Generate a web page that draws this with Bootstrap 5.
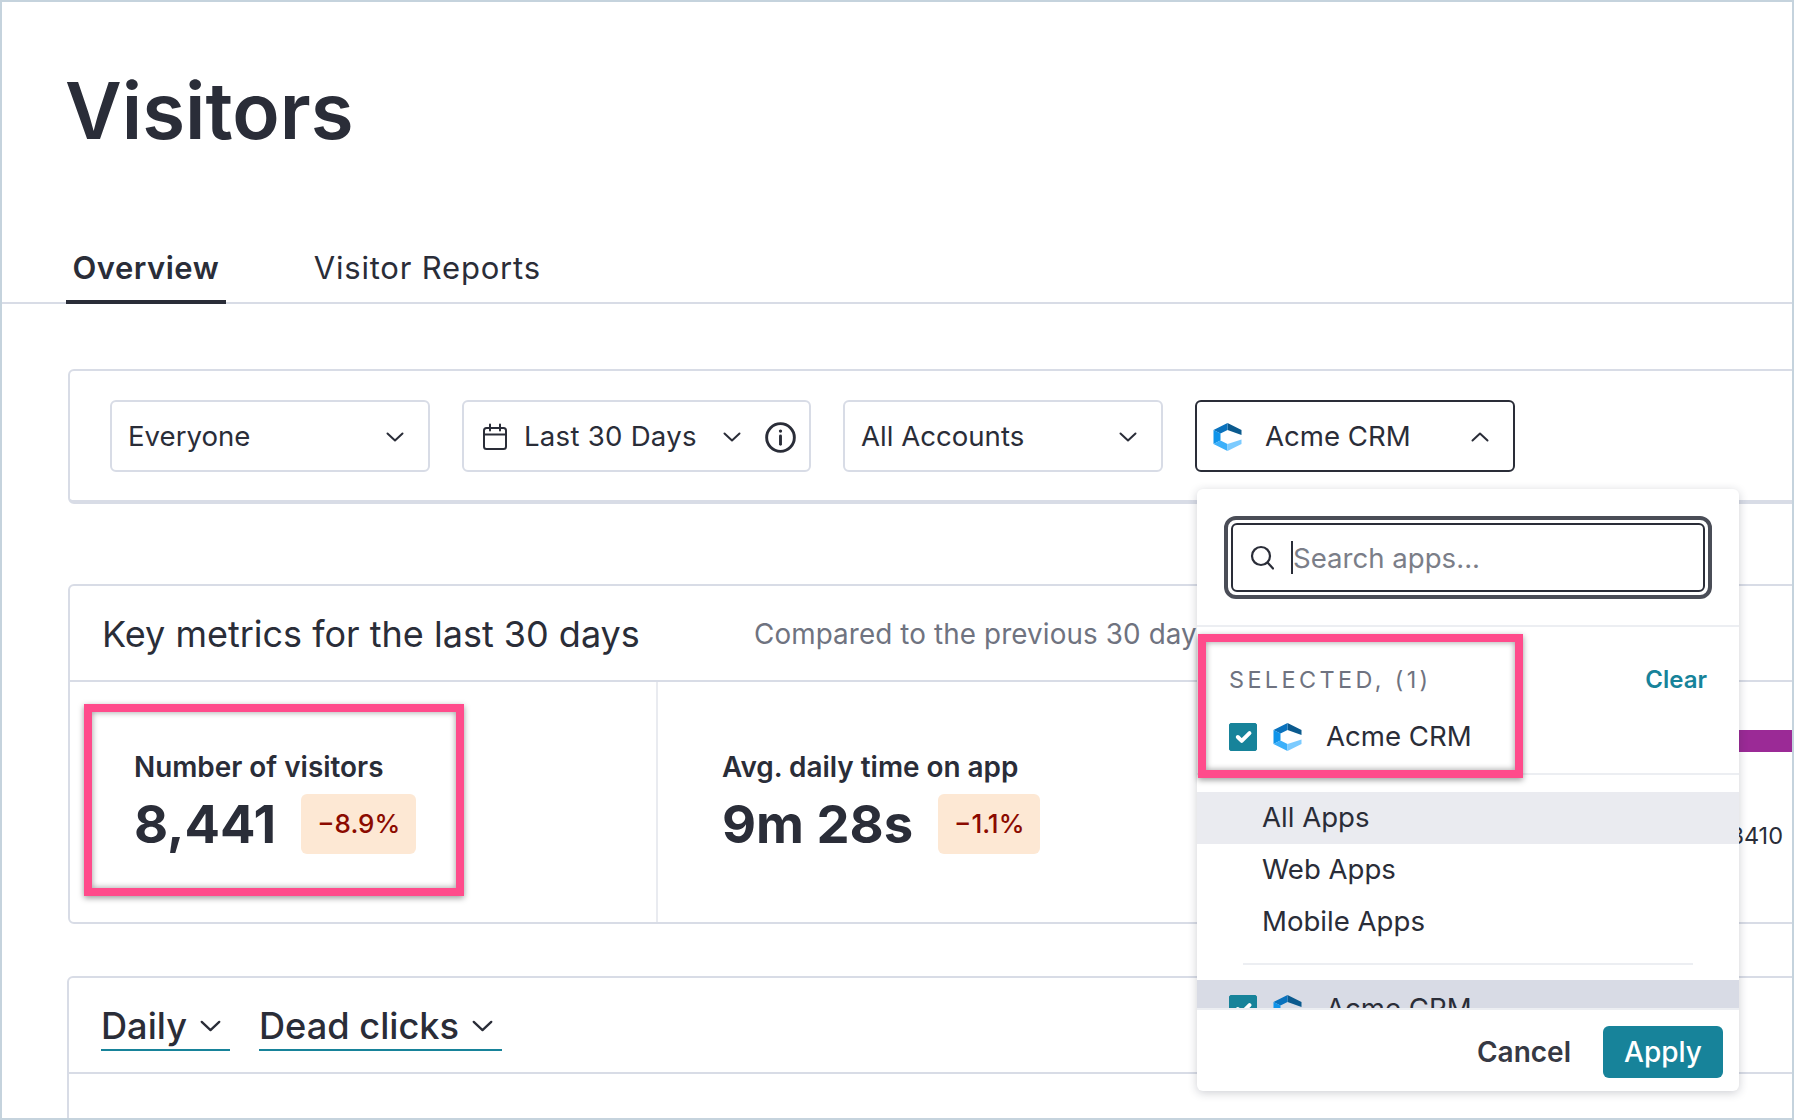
<!DOCTYPE html>
<html>
<head>
    <title>Visitors</title>
    <meta name="viewport" content="width=device-width, initial-scale=1.0">
    <link href="https://cdn.jsdelivr.net/npm/bootstrap@5.3.0/dist/css/bootstrap.min.css" rel="stylesheet">
    <style>
        :root {
            --ink: #2a2d38;
            --line: #d8dce6;
            --teal: #17839a;
            --pink: #ff4b8b;
        }
        body {
            margin: 0;
            background: #fff;
            color: var(--ink);
            font-family: Inter, "Liberation Sans", sans-serif;
        }
        .page-frame {
            width: 1794px;
            height: 1120px;
            border: 2px solid #c5d3dd;
            overflow: hidden;
            position: relative;
        }
        .page-title {
            font-size: 78px;
            font-weight: 600;
            line-height: 90px;
            margin: 64px 0 0 63px;
            color: var(--ink);
        }
        .tab-row {
            margin-top: 80px;
            padding-left: 64px;
            height: 68px;
            border-bottom: 2px solid var(--line);
            gap: 81px;
        }
        .tab-row .nav-link {
            padding: 0 7px;
            height: 68px;
            line-height: 64px;
            font-size: 31px;
            letter-spacing: .8px;
            color: var(--ink);
        }
        .tab-row .nav-link.active {
            font-weight: 600;
            letter-spacing: .5px;
            padding: 0 6.500px;
            border-bottom: 4px solid var(--ink);
        }
        .sheet {
            border: 2px solid var(--line);
            border-radius: 6px;
            margin-left: 66px;
            margin-right: -30px;
        }
        .filter-sheet {
            margin-top: 65px;
            padding: 29px 40px;
            height: 135px;
            border-bottom-width: 4px;
            gap: 32px;
        }
        .filter-btn {
            height: 72px;
            width: 320px;
            border: 2px solid var(--line);
            border-radius: 6px;
            padding: 2px 24px 0 16px;
            font-size: 27.6px;
            color: var(--ink);
        }
        .filter-btn.date-btn {
            width: 349px;
            padding-left: 18px;
            padding-right: 13px;
            letter-spacing: .25px;
        }
        .filter-btn.open-btn, .filter-btn.open-btn:hover {
            border-color: var(--ink);
            color: var(--ink);
        }
        .date-chev {
            margin-left: 26px;
        }
        .open-name {
            margin-left: 23px;
        }
        .metrics-sheet {
            margin-top: 80px;
            height: 340px;
        }
        .metrics-head {
            height: 96px;
            border-bottom: 2px solid var(--line);
            padding-left: 32px;
        }
        .metrics-title {
            font-size: 36px;
            width: 652px;
            white-space: nowrap;
            padding-top: 2px;
        }
        .metrics-note {
            font-size: 27.8px;
            letter-spacing: .12px;
            color: #6f7380;
            white-space: nowrap;
            padding-top: 4px;
        }
        .metric-cell {
            width: 588px;
            padding: 65px 0 0 64px;
            border-right: 2px solid #e9ebf0;
        }
        .metric-label {
            font-size: 27.9px;
            font-weight: 600;
            line-height: 40px;
            margin-bottom: 7px;
        }
        .metric-value {
            font-size: 52.5px;
            font-weight: 650;
            line-height: 60px;
        }
        .delta {
            background: #fde8d4;
            color: #8b0a00;
            border-radius: 6px;
            height: 60px;
            line-height: 60px;
            padding: 0 16px;
            font-size: 26px;
            font-weight: 500;
            margin-left: 25px;
        }
        .far-cell {
            padding: 48px 0 0 0;
        }
        .far-bar {
            height: 22px;
            background: #9b2a96;
        }
        .far-num {
            font-size: 23.5px;
            margin-top: 66px;
            padding-right: 37px;
        }
        .chart-sheet {
            margin-top: 52px;
            margin-left: 65px;
            height: 300px;
        }
        .chart-head {
            height: 96px;
            border-bottom: 2px solid var(--line);
            padding: 20px 0 0 32px;
            gap: 29px;
        }
        .pick {
            font-size: 36.2px;
            font-weight: 500;
            height: 53px;
            padding-top: 4px;
            line-height: 48px;
            border-bottom: 2px solid var(--teal);
            gap: 13px;
            padding-right: 9px;
        }
        .app-menu {
            position: absolute;
            top: 89px;
            left: 2px;
            width: 542px;
            height: 602px;
            background: #fff;
            border-radius: 6px;
            box-shadow: 0 2px 10px rgba(30, 35, 60, .22);
            z-index: 5;
        }
        .search-wrap {
            height: 138px;
            padding: 27px 27px 0 27px;
            border-bottom: 2px solid #eceef2;
        }
        .search-box {
            height: 83px;
            border: 4px solid #4a4d57;
            border-radius: 12px;
            padding: 3px;
        }
        .search-inner {
            height: 100%;
            border: 2px solid var(--ink);
            border-radius: 6px;
            padding-left: 17px;
            gap: 17px;
        }
        .search-caret {
            width: 2px;
            height: 33px;
            background: var(--ink);
            margin-right: -17px;
            flex: none;
        }
        .search-input {
            border: 0;
            outline: 0;
            font-size: 27.6px;
            width: 380px;
            padding: 3px 0 0 0;
            font-family: inherit;
        }
        .search-input::placeholder {
            color: #7b7e88;
        }
        .picked-block {
            height: 148px;
            padding: 36px 32px 0 32px;
            border-bottom: 2px solid #eceef2;
        }
        .picked-title {
            font-size: 23.4px;
            letter-spacing: 3.4px;
            color: #6f7380;
            line-height: 34px;
        }
        .clear-link {
            font-size: 24px;
            font-weight: 600;
            color: var(--teal);
            text-decoration: none;
            line-height: 34px;
        }
        .app-row {
            gap: 16px;
            font-size: 27.6px;
            height: 52px;
            margin-top: 14px;
        }
        .app-row .form-check-input {
            width: 28px;
            height: 28px;
            margin: 0;
            border-radius: 2px;
            background-color: var(--teal);
            border-color: var(--teal);
            flex: none;
        }
        .app-row .app-name {
            margin-left: 8px;
        }
        .menu-scroll {
            height: 233px;
            padding-top: 17px;
            overflow: hidden;
        }
        .menu-scroll .list-group-item {
            border: 0;
            border-radius: 0;
            padding: 0 0 0 65px;
            height: 52px;
            line-height: 51px;
            font-size: 27.6px;
            color: var(--ink);
        }
        .menu-scroll .list-group-item.active {
            background: #eaebf0;
            color: var(--ink);
        }
        .menu-rule {
            border-top: 2px solid #eceef2;
            margin: 15px 46px 15px 46px;
            height: 0;
        }
        .app-row.hit-row {
            background: #d8dbe5;
            padding: 5px 0 0 32px;
            margin-top: 0;
        }
        .menu-foot {
            border-top: 2px solid #eceef2;
            padding: 16px 16px 0 0;
            gap: 32px;
        }
        .cancel-btn {
            font-size: 28px;
            font-weight: 600;
            color: #363944;
            padding: 0;
            border: 0;
        }
        .apply-btn, .apply-btn:hover {
            background: var(--teal);
            color: #fff;
            font-size: 28px;
            font-weight: 500;
            width: 120px;
            height: 52px;
            padding: 0;
            border-radius: 6px;
        }
        .callout {
            position: absolute;
            border: 8px solid var(--pink);
            box-shadow: 0 2px 6px rgba(0, 0, 0, .4), inset 0 0 6px rgba(0, 0, 0, .4);
            z-index: 6;
            pointer-events: none;
        }
        .callout-metric {
            left: 82px;
            top: 702px;
            width: 380px;
            height: 192px;
        }
        .callout-picked {
            left: 1196px;
            top: 632px;
            width: 325px;
            height: 144px;
        }
    </style>
</head>
<body>
    <div class="page-frame">
        <h1 class="page-title">Visitors</h1>

        <ul class="nav tab-row">
            <li class="nav-item"><a class="nav-link active" href="#">Overview</a></li>
            <li class="nav-item"><a class="nav-link" href="#">Visitor Reports</a></li>
        </ul>

        <div class="sheet filter-sheet d-flex">
            <button class="btn filter-btn d-flex align-items-center justify-content-between">
                <span>Everyone</span>
                <svg width="18" height="10" viewBox="0 0 18 10" fill="none" stroke="#2a2d38" stroke-width="2" stroke-linecap="round" stroke-linejoin="round"><path d="M1.5 1.5 9 8.5l7.5-7"/></svg>
            </button>
            <button class="btn filter-btn date-btn d-flex align-items-center">
                <svg class="me-3" width="26" height="28" viewBox="0 0 26 28" fill="none" stroke="#2a2d38" stroke-width="2" stroke-linecap="round"><rect x="2" y="5" width="22" height="21" rx="2.5"/><path d="M2 11.5h22M8 1.5v6M18 1.5v6"/></svg>
                <span>Last 30 Days</span>
                <svg class="date-chev" width="18" height="10" viewBox="0 0 18 10" fill="none" stroke="#2a2d38" stroke-width="2" stroke-linecap="round" stroke-linejoin="round"><path d="M1.5 1.5 9 8.5l7.5-7"/></svg>
                <svg class="ms-auto" width="31" height="31" viewBox="0 0 30 30" fill="none" stroke="#2a2d38" stroke-width="2.8"><circle cx="15" cy="15" r="13.400"/><path d="M15 13.5v8" stroke-linecap="round"/><circle cx="15" cy="8.800" r="1.600" fill="#2a2d38" stroke="none"/></svg>
            </button>
            <button class="btn filter-btn d-flex align-items-center justify-content-between">
                <span>All Accounts</span>
                <svg width="18" height="10" viewBox="0 0 18 10" fill="none" stroke="#2a2d38" stroke-width="2" stroke-linecap="round" stroke-linejoin="round"><path d="M1.5 1.5 9 8.5l7.5-7"/></svg>
            </button>
            <div class="position-relative">
                <button class="btn filter-btn open-btn d-flex align-items-center">
                    <svg width="29" height="28" viewBox="0 0 28 28"><path fill="#0b5a8e" d="M14 0l14 7v5L14 7z"/><path fill="#0a72bd" d="M14 0L0 7l7 3.500L14 7z"/><path fill="#0f94ea" d="M0 7l7 3.500v7L0 21z"/><path fill="#3cb0fa" d="M0 21l7-3.500 7 3.500v7z"/><path fill="#7ccbff" d="M14 28l14-7v-4.500L14 21z"/></svg>
                    <span class="open-name">Acme CRM</span>
                    <svg class="ms-auto" width="18" height="10" viewBox="0 0 18 10" fill="none" stroke="#2a2d38" stroke-width="2" stroke-linecap="round" stroke-linejoin="round"><path d="M1.5 8.500 9 1.500l7.500 7"/></svg>
                </button>

                <div class="app-menu d-flex flex-column">
                    <div class="search-wrap">
                        <div class="search-box">
                            <div class="search-inner d-flex align-items-center">
                                <svg width="24" height="25" viewBox="0 0 24 25" fill="none" stroke="#2a2d38" stroke-width="2.200" stroke-linecap="round"><circle cx="11" cy="11" r="9"/><path d="M18 18l5 5.500"/></svg>
                                <span class="search-caret"></span>
                                <input class="search-input" type="text" placeholder="Search apps...">
                            </div>
                        </div>
                    </div>
                    <div class="picked-block">
                        <div class="d-flex justify-content-between">
                            <span class="picked-title">SELECTED, (1)</span>
                            <a class="clear-link" href="#">Clear</a>
                        </div>
                        <div class="app-row d-flex align-items-center">
                            <input class="form-check-input" type="checkbox" checked>
                            <svg width="29" height="28" viewBox="0 0 28 28"><path fill="#0b5a8e" d="M14 0l14 7v5L14 7z"/><path fill="#0a72bd" d="M14 0L0 7l7 3.500L14 7z"/><path fill="#0f94ea" d="M0 7l7 3.500v7L0 21z"/><path fill="#3cb0fa" d="M0 21l7-3.500 7 3.500v7z"/><path fill="#7ccbff" d="M14 28l14-7v-4.500L14 21z"/></svg>
                            <span class="app-name">Acme CRM</span>
                        </div>
                    </div>
                    <div class="menu-scroll">
                        <div class="list-group">
                            <a class="list-group-item active" href="#">All Apps</a>
                            <a class="list-group-item" href="#">Web Apps</a>
                            <a class="list-group-item" href="#">Mobile Apps</a>
                        </div>
                        <div class="menu-rule"></div>
                        <div class="app-row hit-row d-flex align-items-center">
                            <input class="form-check-input" type="checkbox" checked>
                            <svg width="29" height="28" viewBox="0 0 28 28"><path fill="#0b5a8e" d="M14 0l14 7v5L14 7z"/><path fill="#0a72bd" d="M14 0L0 7l7 3.500L14 7z"/><path fill="#0f94ea" d="M0 7l7 3.500v7L0 21z"/><path fill="#3cb0fa" d="M0 21l7-3.500 7 3.500v7z"/><path fill="#7ccbff" d="M14 28l14-7v-4.500L14 21z"/></svg>
                            <span class="app-name">Acme CRM</span>
                        </div>
                    </div>
                    <div class="menu-foot d-flex justify-content-end align-items-center">
                        <button class="btn cancel-btn">Cancel</button>
                        <button class="btn apply-btn">Apply</button>
                    </div>
                </div>
            </div>
        </div>

        <div class="sheet metrics-sheet">
            <div class="metrics-head d-flex align-items-center">
                <div class="metrics-title">Key metrics for the last 30 days</div>
                <div class="metrics-note">Compared to the previous 30 days</div>
            </div>
            <div class="d-flex" style="height: 240px">
                <div class="metric-cell">
                    <div class="metric-label">Number of visitors</div>
                    <div class="d-flex align-items-center">
                        <span class="metric-value">8,441</span><span class="delta">−8.9%</span>
                    </div>
                </div>
                <div class="metric-cell">
                    <div class="metric-label">Avg. daily time on app</div>
                    <div class="d-flex align-items-center">
                        <span class="metric-value">9m 28s</span><span class="delta">−1.1%</span>
                    </div>
                </div>
                <div class="far-cell flex-grow-1 d-flex flex-column">
                    <div class="far-bar"></div>
                    <div class="far-num text-end">3410</div>
                </div>
            </div>
        </div>

        <div class="sheet chart-sheet">
            <div class="chart-head d-flex align-items-start">
                <div class="pick d-flex align-items-center">
                    <span>Daily</span>
                    <svg width="21" height="12" viewBox="0 0 18 10" fill="none" stroke="#2a2d38" stroke-width="2" stroke-linecap="round" stroke-linejoin="round"><path d="M1.5 1.5 9 8.5l7.5-7"/></svg>
                </div>
                <div class="pick d-flex align-items-center">
                    <span>Dead clicks</span>
                    <svg width="21" height="12" viewBox="0 0 18 10" fill="none" stroke="#2a2d38" stroke-width="2" stroke-linecap="round" stroke-linejoin="round"><path d="M1.5 1.5 9 8.5l7.5-7"/></svg>
                </div>
            </div>
        </div>

        <div class="callout callout-metric"></div>
        <div class="callout callout-picked"></div>
    </div>

    <script src="https://cdn.jsdelivr.net/npm/bootstrap@5.3.0/dist/js/bootstrap.bundle.min.js"></script>
</body>
</html>
